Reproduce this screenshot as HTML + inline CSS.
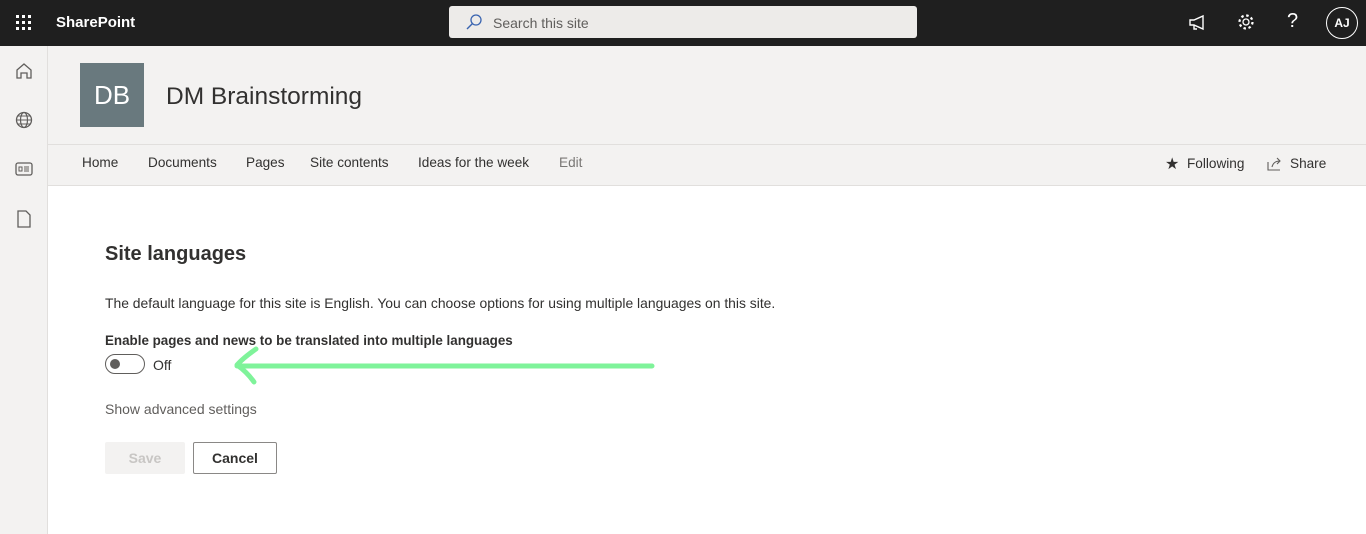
<!DOCTYPE html>
<html><head><meta charset="utf-8"><style>
*{margin:0;padding:0;box-sizing:border-box}
body{width:1366px;height:534px;overflow:hidden;font-family:"Liberation Sans",sans-serif;background:#fff;position:relative;color:#323130}
.top{position:absolute;left:0;top:0;width:1366px;height:46px;background:#1f1f1f}
.abs{position:absolute}
.rail{position:absolute;left:0;top:46px;width:48px;height:488px;background:#f3f2f1;border-right:1px solid #e1dfdd}
.hdr{position:absolute;left:48px;top:46px;width:1318px;height:140px;background:#f3f2f1;border-bottom:1px solid #e1dfdd}
.nav{position:absolute;top:98px;left:0;width:1318px;border-top:1px solid #e1dfdd;height:42px}
.nav span{position:absolute;top:10px;font-size:13.6px;color:#323130}
</style></head><body>
<div class="top">
 <svg class="abs" style="left:15px;top:14px" width="18" height="18">
  <g fill="#fff"><rect x="1" y="1" width="3" height="3"/><rect x="7" y="1" width="3" height="3"/><rect x="13" y="1" width="3" height="3"/><rect x="1" y="7" width="3" height="3"/><rect x="7" y="7" width="3" height="3"/><rect x="13" y="7" width="3" height="3"/><rect x="1" y="13" width="3" height="3"/><rect x="7" y="13" width="3" height="3"/><rect x="13" y="13" width="3" height="3"/></g></svg>
 <div class="abs" style="left:56px;top:14px;color:#fff;font-weight:bold;font-size:15px">SharePoint</div>
 <div class="abs" style="left:449px;top:6px;width:468px;height:32px;background:#edebe9;border-radius:3px">
  <svg class="abs" style="left:16px;top:7px" width="18" height="18"><circle cx="11" cy="7" r="5" fill="none" stroke="#3a64b0" stroke-width="1.3"/><line x1="7.5" y1="10.5" x2="2" y2="16" stroke="#3a64b0" stroke-width="1.4"/></svg>
  <div class="abs" style="left:44px;top:9px;font-size:14px;color:#605e5c">Search this site</div>
 </div>
 <svg class="abs" style="left:1188px;top:14px" width="20" height="18"><path d="M2 6h4l9-4v13l-9-4H2z M6 11v4h3" fill="none" stroke="#fff" stroke-width="1.4"/></svg>
 <svg class="abs" style="left:1236px;top:12px" width="20" height="20"><circle cx="10" cy="10" r="3" fill="none" stroke="#fff" stroke-width="1.3"/><circle cx="10" cy="10" r="6.5" fill="none" stroke="#fff" stroke-width="2.2" stroke-dasharray="2.5 2.6"/></svg>
 <div class="abs" style="left:1287px;top:10px;color:#fff;font-size:20px">?</div>
 <div class="abs" style="left:1326px;top:7px;width:32px;height:32px;border:1px solid #fff;border-radius:50%;color:#fff;font-size:12px;font-weight:bold;text-align:center;line-height:30px">AJ</div>
</div>
<div class="rail">
 <svg class="abs" style="left:15px;top:16px" width="18" height="18"><path d="M2 8L9 2l7 6v8h-4v-5H6v5H2z" fill="none" stroke="#605e5c" stroke-width="1.3"/></svg>
 <svg class="abs" style="left:15px;top:65px" width="18" height="18"><circle cx="9" cy="9" r="7.5" fill="none" stroke="#605e5c" stroke-width="1.3"/><ellipse cx="9" cy="9" rx="3.5" ry="7.5" fill="none" stroke="#605e5c" stroke-width="1.2"/><path d="M1.5 9h15M3 5h12M3 13h12" stroke="#605e5c" stroke-width="1.1"/></svg>
 <svg class="abs" style="left:15px;top:115px" width="18" height="16"><rect x="1" y="2" width="16" height="12" rx="2" fill="none" stroke="#605e5c" stroke-width="1.3"/><path d="M4 6h3v4H4zM9 6h5M9 8h5M9 10h5" stroke="#605e5c" fill="none"/></svg>
 <svg class="abs" style="left:17px;top:164px" width="14" height="18"><path d="M1 1h8l4 4v12H1z" fill="none" stroke="#605e5c" stroke-width="1.3"/></svg>
</div>
<div class="hdr">
 <div class="abs" style="left:32px;top:17px;width:64px;height:64px;background:#69797e;color:#fff;font-size:26px;text-align:center;line-height:64px">DB</div>
 <div class="abs" style="left:118px;top:37px;font-size:24.5px;color:#323130">DM Brainstorming</div>
 <div class="nav">
  <span style="left:34px">Home</span><span style="left:100px">Documents</span><span style="left:198px">Pages</span><span style="left:262px">Site contents</span><span style="left:370px">Ideas for the week</span><span style="left:511px;color:#797775">Edit</span>
  <span style="left:1117px;top:9px;font-size:16px;color:#323130">★</span><span style="left:1139px;top:11px">Following</span>
  <svg class="abs" style="left:1219px;top:12px" width="16" height="14"><path d="M1 5v8h12M5 10c1-4 4-6 8-6M10 1l3 3-3 3" fill="none" stroke="#605e5c" stroke-width="1.1"/></svg>
  <span style="left:1242px;top:11px">Share</span>
 </div>
</div>
<div class="abs" style="left:105px;top:243px;font-size:20px;font-weight:bold">Site languages</div>
<div class="abs" style="left:105px;top:295px;font-size:13.9px">The default language for this site is English. You can choose options for using multiple languages on this site.</div>
<div class="abs" style="left:105px;top:333px;font-size:13.4px;font-weight:bold">Enable pages and news to be translated into multiple languages</div>
<div class="abs" style="left:105px;top:354px;width:40px;height:20px;border:1px solid #605e5c;border-radius:10px"><div class="abs" style="left:4px;top:4px;width:10px;height:10px;border-radius:50%;background:#605e5c"></div></div>
<div class="abs" style="left:153px;top:357px;font-size:14px">Off</div>
<svg class="abs" style="left:225px;top:330px" width="435" height="60"><path d="M427 36H12 M31 19Q18 28 12 35Q22 42 29 52" fill="none" stroke="#7ff39a" stroke-width="5" stroke-linecap="round" stroke-linejoin="round"/></svg>
<div class="abs" style="left:105px;top:401px;font-size:14px;color:#605e5c">Show advanced settings</div>
<div class="abs" style="left:105px;top:442px;width:80px;height:32px;background:#f3f2f1;border-radius:2px;color:#c8c6c4;font-size:14px;font-weight:bold;text-align:center;line-height:32px">Save</div>
<div class="abs" style="left:193px;top:442px;width:84px;height:32px;border:1px solid #8a8886;border-radius:2px;font-size:14px;font-weight:bold;text-align:center;line-height:30px">Cancel</div>
</body></html>
